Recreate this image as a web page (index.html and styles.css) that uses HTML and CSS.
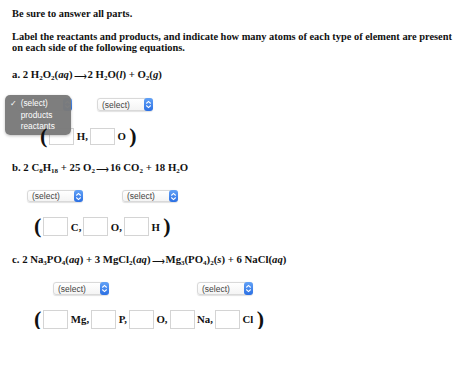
FILE: index.html
```html
<!DOCTYPE html>
<html>
<head>
<meta charset="utf-8">
<link rel="stylesheet" href="styles.css">
</head>
<body>
<div class="page">
  <p class="intro">Be sure to answer all parts.</p>
  <p class="task">Label the reactants and products, and indicate how many atoms of each type of element are present on each side of the following equations.</p>

  <div class="part part-a">
    <div class="eq">a. 2 H<sub>2</sub>O<sub>2</sub>(<i>aq</i>)<span class="arr">⟶</span>2 H<sub>2</sub>O(<i>l</i>) + O<sub>2</sub>(<i>g</i>)</div>
    <div class="sels">
      <div class="sel"><span class="sel-text">(select)</span><span class="step"><svg width="7" height="9" viewBox="0 0 7 9"><path d="M1.3 3.5 L3.5 1.4 L5.7 3.5 M1.3 5.5 L3.5 7.6 L5.7 5.5" fill="none" stroke="#fff" stroke-width="1.1"/></svg></span></div>
      <div class="sel"><span class="sel-text">(select)</span><span class="step"><svg width="7" height="9" viewBox="0 0 7 9"><path d="M1.3 3.5 L3.5 1.4 L5.7 3.5 M1.3 5.5 L3.5 7.6 L5.7 5.5" fill="none" stroke="#fff" stroke-width="1.1"/></svg></span></div>
      <div class="menu">
        <div class="opt"><span class="chk">✓</span>(select)</div>
        <div class="opt">products</div>
        <div class="opt">reactants</div>
      </div>
    </div>
    <div class="atoms">
      <span class="paren">(</span><span class="box"></span><span class="el">H,</span><span class="box"></span><span class="el">O</span><span class="paren close">)</span>
    </div>
  </div>

  <div class="part part-b">
    <div class="eq">b. 2 C<sub>8</sub>H<sub>18</sub> + 25 O<sub>2</sub><span class="arr">⟶</span>16 CO<sub>2</sub> + 18 H<sub>2</sub>O</div>
    <div class="sels">
      <div class="sel"><span class="sel-text">(select)</span><span class="step"><svg width="7" height="9" viewBox="0 0 7 9"><path d="M1.3 3.5 L3.5 1.4 L5.7 3.5 M1.3 5.5 L3.5 7.6 L5.7 5.5" fill="none" stroke="#fff" stroke-width="1.1"/></svg></span></div>
      <div class="sel"><span class="sel-text">(select)</span><span class="step"><svg width="7" height="9" viewBox="0 0 7 9"><path d="M1.3 3.5 L3.5 1.4 L5.7 3.5 M1.3 5.5 L3.5 7.6 L5.7 5.5" fill="none" stroke="#fff" stroke-width="1.1"/></svg></span></div>
    </div>
    <div class="atoms">
      <span class="paren">(</span><span class="box"></span><span class="el">C,</span><span class="box"></span><span class="el">O,</span><span class="box"></span><span class="el">H</span><span class="paren close">)</span>
    </div>
  </div>

  <div class="part part-c">
    <div class="eq">c. 2 Na<sub>3</sub>PO<sub>4</sub>(<i>aq</i>) + 3 MgCl<sub>2</sub>(<i>aq</i>)<span class="arr">⟶</span>Mg<sub>3</sub>(PO<sub>4</sub>)<sub>2</sub>(<i>s</i>) + 6 NaCl(<i>aq</i>)</div>
    <div class="sels">
      <div class="sel"><span class="sel-text">(select)</span><span class="step"><svg width="7" height="9" viewBox="0 0 7 9"><path d="M1.3 3.5 L3.5 1.4 L5.7 3.5 M1.3 5.5 L3.5 7.6 L5.7 5.5" fill="none" stroke="#fff" stroke-width="1.1"/></svg></span></div>
      <div class="sel"><span class="sel-text">(select)</span><span class="step"><svg width="7" height="9" viewBox="0 0 7 9"><path d="M1.3 3.5 L3.5 1.4 L5.7 3.5 M1.3 5.5 L3.5 7.6 L5.7 5.5" fill="none" stroke="#fff" stroke-width="1.1"/></svg></span></div>
    </div>
    <div class="atoms">
      <span class="paren">(</span><span class="box"></span><span class="el">Mg,</span><span class="box"></span><span class="el">P,</span><span class="box"></span><span class="el">O,</span><span class="box"></span><span class="el">Na,</span><span class="box"></span><span class="el">Cl</span><span class="paren close">)</span>
    </div>
  </div>
</div>
</body>
</html>
```
FILE: styles.css
```css
* { box-sizing: border-box; }
html, body { margin: 0; padding: 0; background: #fff; }
body {
  font-family: "Liberation Serif", "Times New Roman", serif;
  font-weight: bold;
  color: #111;
  font-size: 10.8px;
}
.page { padding: 7px 0 0 12px; width: 474px; }
p { margin: 0; }
.intro { font-size: 10.4px; line-height: 13px; }
.task { font-size: 10.4px; margin-top: 10.5px; line-height: 11px; padding-right: 10px; }
.part { display: flex; flex-direction: column; }
.part-a { margin-top: 14px; }
.part-b { margin-top: 14.5px; }
.part-c { margin-top: 15.5px; }
.eq { height: 14px; line-height: 14px; white-space: nowrap; font-size: 10.75px; }
sub { font-size: 7px; vertical-align: -2px; line-height: 0; }
.arr { font-size: 9px; font-weight: normal; display: inline-block; margin: 0 1px; vertical-align: -1px; }
.sels { position: relative; display: flex; height: 14px; align-items: center; }
.part-a .sels { margin-top: 17px; padding-left: 4px; gap: 25px; }
.part-b .sels { margin-top: 15px; padding-left: 15px; gap: 39px; }
.part-c .sels { margin-top: 16px; padding-left: 41px; gap: 88px; }
.sel {
  display: flex; align-items: center; justify-content: space-between;
  width: 56px; height: 12.5px;
  border: 1px solid #d9d9d9; border-radius: 3px;
  background: linear-gradient(#fff, #f4f4f4);
  box-shadow: 0 0.5px 1px rgba(0,0,0,0.12);
  padding-left: 4px;
  font-family: "Liberation Sans", Arial, sans-serif; font-weight: normal;
  font-size: 8.5px; color: #444;
}
.step {
  width: 9.5px; height: 12.5px; margin-right: -1px; border-radius: 3px;
  background: linear-gradient(#62a2f7, #2b6fe3);
  display: flex; align-items: center; justify-content: center;
}
.menu {
  position: absolute; left: -7px; top: -2.5px; width: 66px; height: 40px;
  background: rgba(122,122,122,0.97); border-radius: 5px;
  box-shadow: 0 1px 3px rgba(0,0,0,0.25);
  font-family: "Liberation Sans", Arial, sans-serif; font-weight: normal;
  font-size: 8.3px; color: #fff; padding-top: 3.3px;
}
.opt { height: 11.3px; line-height: 11.3px; padding-left: 15.7px; position: relative; }
.chk { position: absolute; left: 5px; top: 0; font-size: 8px; }
.atoms { display: flex; align-items: center; height: 19px; }
.part-a .atoms { margin-top: 15px; padding-left: 28px; }
.part-b .atoms { margin-top: 14px; padding-left: 22px; }
.part-c .atoms { margin-top: 14px; padding-left: 22px; }
.paren { font-size: 22px; line-height: 19px; position: relative; top: -1px; margin-right: 2px; }
.paren.close { margin-right: 0; margin-left: 1.5px; }
.box { width: 25px; height: 19px; border: 1px solid #d4d4d4; background: #fff; }
.part-a .box { height: 17px; }
.el { font-size: 10.8px; margin: 0 2px 0 2.5px; }
```
